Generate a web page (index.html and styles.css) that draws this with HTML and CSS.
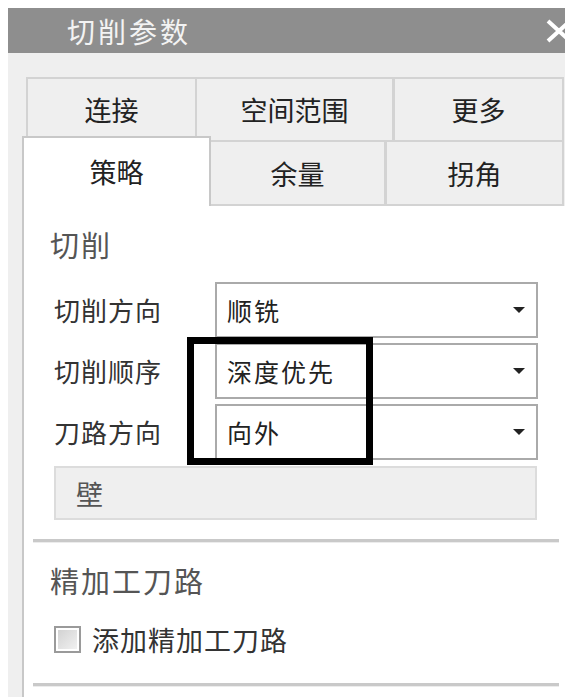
FILE: index.html
```html
<!DOCTYPE html>
<html lang="zh-CN">
<head>
  <meta charset="UTF-8" />
  <meta name="viewport" content="width=device-width, initial-scale=1" />
  <title>切削参数</title>
  <link rel="stylesheet" href="styles.css">
</head>
<body>
  <div class="dialog">
    <div class="titlebar">
      <span class="title">切削参数</span>
      <svg class="close" width="28" height="24" viewBox="0 0 28 24">
        <path d="M3 2 L25 22 M25 2 L3 22" stroke="#fff" stroke-width="4" fill="none" />
      </svg>
    </div>

    <div class="tabs">
      <div class="tab-row top-row">
        <div class="tab">连接</div>
        <div class="tab">空间范围</div>
        <div class="tab">更多</div>
      </div>
      <div class="tab-row bottom-row">
        <div class="tab active">策略</div>
        <div class="tab">余量</div>
        <div class="tab">拐角</div>
      </div>
    </div>

    <div class="pane">
      <div class="section">
        <div class="section-title">切削</div>

        <div class="field">
          <span class="label">切削方向</span>
          <div class="select"><span>顺铣</span><i class="caret"></i></div>
        </div>
        <div class="field">
          <span class="label">切削顺序</span>
          <div class="select"><span>深度优先</span><i class="caret"></i></div>
        </div>
        <div class="field">
          <span class="label">刀路方向</span>
          <div class="select"><span>向外</span><i class="caret"></i></div>
        </div>

        <div class="group-bar">壁</div>
      </div>

      <div class="divider"></div>

      <div class="section finish">
        <div class="section-title">精加工刀路</div>
        <label class="check">
          <span class="box"></span>
          <span>添加精加工刀路</span>
        </label>
      </div>

      <div class="divider last"></div>
    </div>
  </div>

  <!-- annotation frame drawn over the selects -->
  <div class="mark"></div>
</body>
</html>
```

FILE: styles.css
```css
* { box-sizing: border-box; }
body {
  margin: 0;
  padding: 0;
  background: #fff;
  font-family: "Noto Sans CJK SC", "Noto Sans", sans-serif;
  color: #222;
  height: 697px;
  overflow: hidden;
}
.dialog {
  width: 557px;
  margin: 8px 0 0 8px;
  background: #efefef;
  min-height: 689px;
}
.titlebar {
  height: 45px;
  background: #8e8e8e;
  display: flex;
  align-items: center;
  padding-left: 59px;
  overflow: hidden;
}
.title {
  color: #f3f3f3;
  font-size: 28px;
  letter-spacing: 3px;
  line-height: 1;
}
.close {
  margin-left: auto;
  margin-right: -8px;
  flex-shrink: 0;
}
.tabs {
  padding: 24px 0 0 14px;
}
.tab-row {
  display: flex;
}
.tab {
  display: flex;
  justify-content: center;
  align-items: center;
  background: #efefef;
  border: 2px solid #d3d3d3;
  font-size: 27px;
  line-height: 1;
  color: #222;
}
.top-row {
  margin-left: 4px;
  width: 538px;
  height: 65px;
}
.top-row .tab:nth-child(1) { width: 171px; }
.top-row .tab:nth-child(2) { width: 198px; border-left: 0; border-right-width: 3px; }
.top-row .tab:nth-child(3) { flex: 1; border-left: 0; }
.bottom-row {
  height: 64px;
  width: 542px;
}
.bottom-row .tab { border-top: 0; }
.bottom-row .tab:nth-child(2) { width: 176px; border-left: 0; border-right-width: 3px; }
.bottom-row .tab:nth-child(3) { flex: 1; border-left: 0; }
.tab.active {
  width: 189px;
  height: 70px;
  margin-top: -6px;
  background: #fff;
  border: 2px solid #c8c8c8;
  border-bottom: 0;
  padding-bottom: 2px;
}
.pane {
  margin-left: 14px;
  background: #fff;
  border-left: 2px solid #c8c8c8;
  padding: 0 6px 12px 9px;
  min-height: 491px;
}
.section {
  padding: 0 21px 0 21px;
}
.section-title {
  font-size: 29px;
  letter-spacing: 2px;
  line-height: 1;
  color: #555;
  margin-left: -4px;
  padding-top: 24px;
  margin-bottom: 23px;
}
.finish .section-title {
  margin-bottom: 31px;
}
.field {
  display: flex;
  align-items: center;
  margin-bottom: 5px;
}
.label {
  width: 161px;
  font-size: 26px;
  letter-spacing: 1px;
  line-height: 1;
  color: #333;
}
.select {
  width: 323px;
  height: 56px;
  border: 2px solid #aaa;
  background: #fff;
  display: flex;
  align-items: center;
  padding: 0 11px 0 10px;
  font-size: 25px;
  letter-spacing: 2px;
  line-height: 1;
  color: #222;
}
.caret {
  margin-left: auto;
  width: 0;
  height: 0;
  border-left: 6px solid transparent;
  border-right: 6px solid transparent;
  border-top: 6px solid #222;
}
.group-bar {
  margin-top: 6px;
  height: 54px;
  width: 483px;
  background: #efefef;
  border: 2px solid #dcdcdc;
  display: flex;
  align-items: center;
  padding-left: 20px;
  font-size: 27px;
  line-height: 1;
  color: #555;
}
.divider {
  margin-top: 19px;
  border-top: 3px solid #c9c9c9;
  box-shadow: 0 1px 0 #ececec;
}
.divider.last {
  margin-top: 30px;
}
.check {
  display: flex;
  align-items: center;
  gap: 11px;
  font-size: 27px;
  letter-spacing: 1px;
  line-height: 1;
  color: #333;
}
.box {
  width: 27px;
  height: 27px;
  border: 2px solid #9a9a9a;
  background: linear-gradient(135deg, #cfcfcf, #f4f4f4);
  box-shadow: inset 0 0 0 2px #fff;
}
.mark {
  position: absolute;
  left: 187px;
  top: 337px;
  width: 186px;
  height: 128px;
  border: 7px solid #000;
}
```
